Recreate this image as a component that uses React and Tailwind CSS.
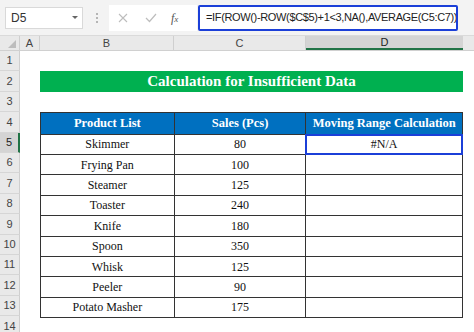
const rows = [
  ["Skimmer", "80"],
  ["Frying Pan", "100"],
  ["Steamer", "125"],
  ["Toaster", "240"],
  ["Knife", "180"],
  ["Spoon", "350"],
  ["Whisk", "125"],
  ["Peeler", "90"],
  ["Potato Masher", "175"],
];

const serif = { fontFamily: '"Liberation Serif", "Times New Roman", serif' };

export default function App() {
  return (
    <div className="w-[474px] h-[332px] overflow-hidden bg-white font-['Liberation_Sans',Arial,sans-serif]">
      {/* formula bar */}
      <div className="h-[36px] bg-[#f3f3f3] flex items-center border-b border-[#dadada]">
        <div className="ml-[5px] w-[78px] h-[22px] bg-white border border-[#d9d9d9] flex items-center justify-between pl-[5px] pr-[4px]">
          <span className="text-[12px] text-[#333]">D5</span>
          <span className="w-0 h-0 border-l-[3px] border-r-[3px] border-t-[3px] border-l-transparent border-r-transparent border-t-[#666]" />
        </div>
        <div className="ml-[13px] flex flex-col gap-[2px]">
          <span className="w-[2px] h-[2px] bg-[#b5b5b5]" />
          <span className="w-[2px] h-[2px] bg-[#b5b5b5]" />
          <span className="w-[2px] h-[2px] bg-[#b5b5b5]" />
        </div>
        <div className="ml-[11px] h-[26px] w-[88px] bg-white flex items-center">
          <svg width="10" height="10" viewBox="0 0 10 10" className="ml-[9px]">
            <path d="M1 1 L9 9 M9 1 L1 9" stroke="#bdbdbd" strokeWidth="1.1" />
          </svg>
          <svg width="12" height="10" viewBox="0 0 12 10" className="ml-[17px]">
            <path d="M1 5 L4.5 8.5 L11 1" stroke="#bdbdbd" strokeWidth="1.2" fill="none" />
          </svg>
          <span className="ml-[14px] text-[12px] italic text-[#555]" style={serif}>
            f<span className="text-[9px]">x</span>
          </span>
        </div>
        <div className="ml-[1px] w-[260px] h-[26px] bg-white border-2 border-[#1b3fd8] rounded-[2px] flex items-center pl-[6px] overflow-hidden">
          <span className="text-[11px] text-[#222] tracking-[-0.35px] whitespace-nowrap">
            =IF(ROW()-ROW($C$5)+1&lt;3,NA(),AVERAGE(C5:C7))
          </span>
        </div>
      </div>

      {/* column headers */}
      <div className="h-[15px] flex bg-[#e9e9e9] text-[11px] text-[#444] border-b border-[#d0d0d0]">
        <div className="w-[20px] border-r border-[#cfcfcf] relative">
          <span className="absolute right-[3px] bottom-[2px] w-0 h-0 border-l-[8px] border-l-transparent [border-bottom:8px_solid_#bdbdbd]" />
        </div>
        <div className="w-[20px] border-r border-[#cfcfcf] flex items-center justify-center">A</div>
        <div className="w-[134px] border-r border-[#cfcfcf] flex items-center justify-center">B</div>
        <div className="w-[132px] border-r border-[#cfcfcf] flex items-center justify-center">C</div>
        <div className="w-[157px] bg-[#d4d4d4] border-b-2 border-[#217346] flex items-center justify-center text-[#222]">D</div>
        <div className="flex-1" />
      </div>

      <div className="flex">
        {/* row headers */}
        <div className="w-[20px] flex flex-col text-[11px] text-[#444] bg-[#e9e9e9]">
          {Array.from({ length: 14 }, (_, i) => (
            <div
              key={i}
              className={
                "h-[20.4px] shrink-0 flex items-center justify-center border-b border-[#d6d6d6] " +
                (i === 4 ? "bg-[#d4d4d4] border-r-2 border-r-[#217346] text-[#222]" : "border-r border-r-[#cfcfcf]")
              }
            >
              {i + 1}
            </div>
          ))}
        </div>

        {/* sheet */}
        <div className="pl-[20px] flex flex-col">
          <div className="h-[20.4px]" />
          <div
            className="h-[20.4px] w-[423px] bg-[#00b050] text-white font-bold text-[15px] flex items-center justify-center"
            style={serif}
          >
            Calculation for Insufficient Data
          </div>
          <div className="h-[20.4px]" />
          <div className="w-[423px] border-l border-t border-[#333]" style={serif}>
            <div className="flex h-[21.4px] bg-[#0070c0] text-white font-bold text-[12.5px]">
              <div className="w-[134px] border-r border-b border-[#333] flex items-center justify-center">Product List</div>
              <div className="w-[132px] border-r border-b border-[#333] flex items-center justify-center">Sales (Pcs)</div>
              <div className="w-[157px] border-r border-b border-[#333] flex items-center justify-center">Moving Range Calculation</div>
            </div>
            {rows.map(([name, sales], i) => (
              <div key={name} className="flex h-[20.4px] text-[12px] text-[#111]">
                <div className="w-[134px] border-r border-b border-[#333] flex items-center justify-center">{name}</div>
                <div className="w-[132px] border-r border-b border-[#333] flex items-center justify-center">{sales}</div>
                <div className="w-[157px] border-r border-b border-[#333] flex items-center justify-center relative">
                  {i === 0 && (
                    <>
                      <span>#N/A</span>
                      <span className="absolute -left-[1px] -top-[1px] -right-[1px] -bottom-[1px] border-2 border-[#1b3fd8]" />
                    </>
                  )}
                </div>
              </div>
            ))}
          </div>
        </div>
      </div>
    </div>
  );
}
